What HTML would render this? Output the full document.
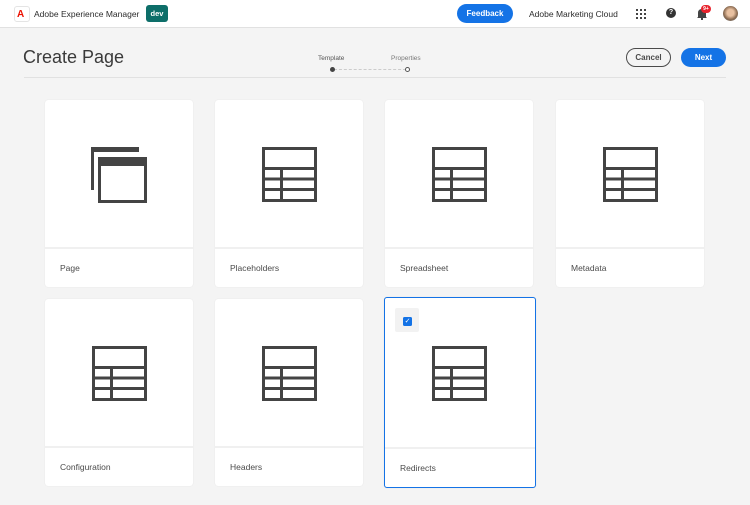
<!DOCTYPE html>
<html><head><style>
*{margin:0;padding:0;box-sizing:border-box}
body{width:750px;height:505px;background:#f4f4f4;font-family:"Liberation Sans",sans-serif;position:relative;overflow:hidden;color:#323232}
.top{position:absolute;left:0;top:0;width:750px;height:28px;background:#fff;border-bottom:1px solid #e1e1e1}
.a{position:absolute}
.card{position:absolute;width:148px;height:187px;background:#fff;border-radius:3px;box-shadow:0 0 1px rgba(0,0,0,.12)}
.card .sep{position:absolute;left:0;right:0;top:147px;height:2px;background:#f0f0f0}
.card .lbl{position:absolute;left:15px;top:163px;font-size:8.5px;color:#4b4b4b}
.card svg{position:absolute;left:46px;top:46px}
</style></head><body>
<div class="top">
 <div class="a" style="left:14px;top:6px;width:16px;height:16px;border:1px solid #e4e4e4;border-radius:3px;background:#fff"></div>
 <div class="a" style="left:17px;top:9px;color:#eb1000;font-size:10px;font-weight:bold">A</div>
 <div class="a" style="left:34px;top:9px;font-size:8.5px;color:#2c2c2c">Adobe Experience Manager</div>
 <div class="a" style="left:146px;top:5px;width:22px;height:17px;background:#0d6e69;border-radius:3px;color:#fff;font-size:7.5px;font-weight:bold;text-align:center;line-height:17px">dev</div>
 <div class="a" style="left:457px;top:4px;width:56px;height:19px;background:#1473e6;border-radius:10px;color:#fff;font-size:8px;font-weight:bold;text-align:center;line-height:19px">Feedback</div>
 <div class="a" style="left:529px;top:9px;font-size:8.5px;color:#2c2c2c">Adobe Marketing Cloud</div>
 <svg class="a" style="left:636px;top:9px" width="10" height="10"><g fill="#444"><rect x="0" y="0" width="2" height="2"/><rect x="4" y="0" width="2" height="2"/><rect x="8" y="0" width="2" height="2"/><rect x="0" y="4" width="2" height="2"/><rect x="4" y="4" width="2" height="2"/><rect x="8" y="4" width="2" height="2"/><rect x="0" y="8" width="2" height="2"/><rect x="4" y="8" width="2" height="2"/><rect x="8" y="8" width="2" height="2"/></g></svg>
 <div class="a" style="left:666px;top:8px;width:10px;height:10px;border-radius:50%;background:#333;color:#fff;font-size:7px;font-weight:bold;text-align:center;line-height:10px">?</div>
 <svg class="a" style="left:696px;top:7px" width="12" height="13"><path d="M2 10 L2 6 Q2 2 6 2 Q10 2 10 6 L10 10 L11 11 L1 11 Z" fill="#444"/><rect x="5" y="11" width="2" height="2" fill="#444"/></svg>
 <div class="a" style="left:701px;top:5px;width:10px;height:8px;background:#e8232d;border-radius:4px;color:#fff;font-size:5px;font-weight:bold;text-align:center;line-height:8px">9+</div>
 <div class="a" style="left:723px;top:6px;width:15px;height:15px;border-radius:50%;background:radial-gradient(circle at 50% 45%,#e8c0a0 30%,#8a6a50 60%,#607080)"></div>
</div>
<div class="a" style="left:23px;top:47px;font-size:18px;color:#3a3a3a">Create Page</div>
<div class="a" style="left:24px;top:77px;width:702px;height:1px;background:#e1e1e1"></div>
<div class="a" style="left:318px;top:55px;font-size:6.5px;color:#555">Template</div>
<div class="a" style="left:391px;top:55px;font-size:6.5px;color:#777">Properties</div>
<div class="a" style="left:334px;top:69px;width:72px;border-top:1px dashed #ccc"></div>
<div class="a" style="left:330px;top:67px;width:5px;height:5px;border-radius:50%;background:#444"></div>
<div class="a" style="left:405px;top:67px;width:5px;height:5px;border-radius:50%;border:1px solid #555;background:#fff"></div>
<div class="a" style="left:626px;top:48px;width:45px;height:19px;border:1.5px solid #4b4b4b;border-radius:10px;font-size:8px;font-weight:bold;color:#4b4b4b;text-align:center;line-height:17px">Cancel</div>
<div class="a" style="left:681px;top:48px;width:45px;height:19px;background:#1473e6;border-radius:10px;font-size:8px;font-weight:bold;color:#fff;text-align:center;line-height:19px">Next</div>

<div class="card" style="left:45px;top:100px"><svg width="60" height="60" style="left:46px;top:47px"><rect x="0" y="0" width="48" height="5" fill="#444"/><rect x="0" y="0" width="3" height="43" fill="#444"/><rect x="8.5" y="11.5" width="46" height="43" fill="#fff" stroke="#444" stroke-width="3"/><rect x="7" y="10" width="49" height="9" fill="#444"/></svg><div class="sep"></div><div class="lbl">Page</div></div>

<svg width="0" height="0" style="position:absolute"><defs><g id="t"><rect x="1.5" y="1.5" width="52" height="52" fill="none" stroke="#444" stroke-width="3"/><path d="M1 21.5H54M1 32H54M1 42.5H54M19.5 21V54" stroke="#444" stroke-width="3"/></g></defs></svg>

<div class="card" style="left:215px;top:100px"><svg width="55" height="55" style="left:47px;top:47px"><use href="#t"/></svg><div class="sep"></div><div class="lbl">Placeholders</div></div>
<div class="card" style="left:385px;top:100px"><svg width="55" height="55" style="left:47px;top:47px"><use href="#t"/></svg><div class="sep"></div><div class="lbl">Spreadsheet</div></div>
<div class="card" style="left:556px;top:100px"><svg width="55" height="55" style="left:47px;top:47px"><use href="#t"/></svg><div class="sep"></div><div class="lbl">Metadata</div></div>
<div class="card" style="left:45px;top:299px"><svg width="55" height="55" style="left:47px;top:47px"><use href="#t"/></svg><div class="sep"></div><div class="lbl">Configuration</div></div>
<div class="card" style="left:215px;top:299px"><svg width="55" height="55" style="left:47px;top:47px"><use href="#t"/></svg><div class="sep"></div><div class="lbl">Headers</div></div>
<div class="card" style="left:384px;top:297px;width:152px;height:191px;border:1.5px solid #1473e6"><svg width="55" height="55" style="left:47px;top:48px"><use href="#t"/></svg><div class="sep" style="top:149px"></div><div class="lbl" style="top:165px">Redirects</div>
 <div class="a" style="left:10px;top:10px;width:24px;height:24px;background:#f2f2f2;border-radius:2px"></div>
 <div class="a" style="left:18px;top:19px;width:9px;height:9px;background:#1473e6;border-radius:1.5px;color:#fff;font-size:7px;line-height:9px;text-align:center">✓</div>
</div>
</body></html>
